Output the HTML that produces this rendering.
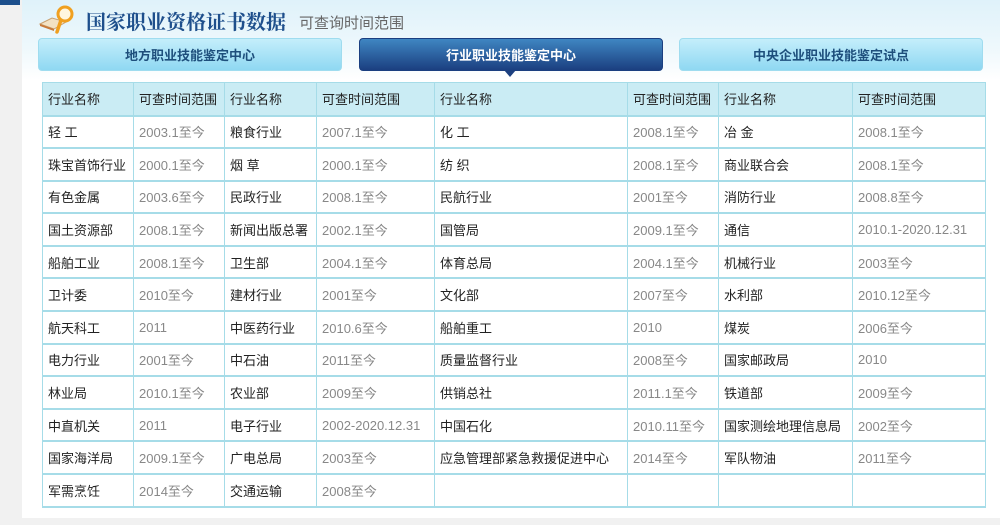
<!DOCTYPE html>
<html><head><meta charset="utf-8"><style>
*{margin:0;padding:0;box-sizing:border-box}
body{width:1000px;height:525px;background:#f1f1f1;font-family:"Liberation Sans","Noto Sans CJK SC",sans-serif;position:relative;overflow:hidden}
.panel{position:absolute;left:22px;top:0;width:978px;height:518px;background:#fff}
.hd{position:absolute;left:22px;top:0;width:978px;height:80px;background:linear-gradient(180deg,#dff2fa 0%,#eef8fc 60%,#fff 100%)}
.bar{position:absolute;left:0;top:0;width:20px;height:5px;background:#1d4f8c}
.title{position:absolute;left:86px;top:6px;font-size:20px;font-weight:bold;color:#1e4f8c;font-family:"Noto Serif CJK SC",serif;letter-spacing:0px}
.sub{position:absolute;left:299px;top:12px;font-size:15px;color:#666}
.tab{position:absolute;top:38px;height:33px;width:304px;border-radius:4px;text-align:center;line-height:33px;font-size:13px;font-weight:bold;color:#1e4f7c;background:linear-gradient(#c4eefb,#8fd8f2);border:1px solid #9fdcef}
.tab.on{background:linear-gradient(#3f86c2,#1b3f80);color:#fff;border-color:#1b3f80}
.arr{position:absolute;left:504px;top:70px;width:0;height:0;border-left:6px solid transparent;border-right:6px solid transparent;border-top:7px solid #1b3f80}
table{position:absolute;left:42px;top:82px;border-collapse:collapse;font-size:13px}
td{border:1px solid #a6dce8;height:32.6px;padding:0 5px;color:#222;white-space:nowrap}
tr{border-bottom:2px solid #a6dce8}
tr.h td{background:#caecf4;height:33px}
td.d{color:#888}
</style></head><body>
<div class="panel"></div><div class="hd"></div><div class="bar"></div>
<svg style="position:absolute;left:38px;top:4px" width="46" height="32" viewBox="0 0 46 32">
<path d="M2 20 L14 14 L28 18 L16 25 Z" fill="#f3e2c4" stroke="#c9a070"/>
<path d="M2 20 L16 25 L16 27 L2 22 Z" fill="#c97a3a"/>
<circle cx="27" cy="10" r="7" fill="#fff6e0" stroke="#f0a020" stroke-width="3"/>
<path d="M23 16 L19 28" stroke="#f0a020" stroke-width="3.5" stroke-linecap="round"/>
</svg>
<div class="title">国家职业资格证书数据</div>
<div class="sub">可查询时间范围</div>
<div class="tab" style="left:38px">地方职业技能鉴定中心</div>
<div class="tab on" style="left:359px">行业职业技能鉴定中心</div>
<div class="arr"></div>
<div class="tab" style="left:679px">中央企业职业技能鉴定试点</div>
<table>
<colgroup><col style="width:91px"><col style="width:91px"><col style="width:92px"><col style="width:118px"><col style="width:193px"><col style="width:91px"><col style="width:134px"><col style="width:133px"></colgroup>
<tr class="h"><td>行业名称</td><td>可查时间范围</td><td>行业名称</td><td>可查时间范围</td><td>行业名称</td><td>可查时间范围</td><td>行业名称</td><td>可查时间范围</td></tr>
<tr><td>轻 工</td><td class="d">2003.1至今</td><td>粮食行业</td><td class="d">2007.1至今</td><td>化 工</td><td class="d">2008.1至今</td><td>冶 金</td><td class="d">2008.1至今</td></tr>
<tr><td>珠宝首饰行业</td><td class="d">2000.1至今</td><td>烟 草</td><td class="d">2000.1至今</td><td>纺 织</td><td class="d">2008.1至今</td><td>商业联合会</td><td class="d">2008.1至今</td></tr>
<tr><td>有色金属</td><td class="d">2003.6至今</td><td>民政行业</td><td class="d">2008.1至今</td><td>民航行业</td><td class="d">2001至今</td><td>消防行业</td><td class="d">2008.8至今</td></tr>
<tr><td>国土资源部</td><td class="d">2008.1至今</td><td>新闻出版总署</td><td class="d">2002.1至今</td><td>国管局</td><td class="d">2009.1至今</td><td>通信</td><td class="d">2010.1-2020.12.31</td></tr>
<tr><td>船舶工业</td><td class="d">2008.1至今</td><td>卫生部</td><td class="d">2004.1至今</td><td>体育总局</td><td class="d">2004.1至今</td><td>机械行业</td><td class="d">2003至今</td></tr>
<tr><td>卫计委</td><td class="d">2010至今</td><td>建材行业</td><td class="d">2001至今</td><td>文化部</td><td class="d">2007至今</td><td>水利部</td><td class="d">2010.12至今</td></tr>
<tr><td>航天科工</td><td class="d">2011</td><td>中医药行业</td><td class="d">2010.6至今</td><td>船舶重工</td><td class="d">2010</td><td>煤炭</td><td class="d">2006至今</td></tr>
<tr><td>电力行业</td><td class="d">2001至今</td><td>中石油</td><td class="d">2011至今</td><td>质量监督行业</td><td class="d">2008至今</td><td>国家邮政局</td><td class="d">2010</td></tr>
<tr><td>林业局</td><td class="d">2010.1至今</td><td>农业部</td><td class="d">2009至今</td><td>供销总社</td><td class="d">2011.1至今</td><td>铁道部</td><td class="d">2009至今</td></tr>
<tr><td>中直机关</td><td class="d">2011</td><td>电子行业</td><td class="d">2002-2020.12.31</td><td>中国石化</td><td class="d">2010.11至今</td><td>国家测绘地理信息局</td><td class="d">2002至今</td></tr>
<tr><td>国家海洋局</td><td class="d">2009.1至今</td><td>广电总局</td><td class="d">2003至今</td><td>应急管理部紧急救援促进中心</td><td class="d">2014至今</td><td>军队物油</td><td class="d">2011至今</td></tr>
<tr><td>军需烹饪</td><td class="d">2014至今</td><td>交通运输</td><td class="d">2008至今</td><td></td><td></td><td></td><td></td></tr>
</table>
</body></html>
